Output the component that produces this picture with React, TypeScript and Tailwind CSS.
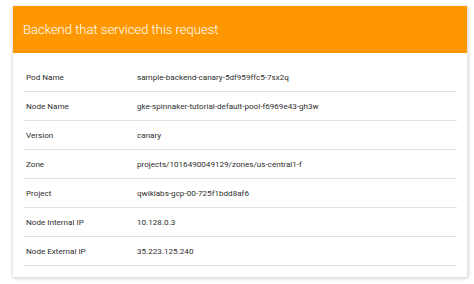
import React from 'react';

interface Row {
    label: string;
    value: string;
}

const rows: Row[] = [
    { label: 'Pod Name', value: 'sample-backend-canary-5df959ffc5-7sx2q' },
    { label: 'Node Name', value: 'gke-spinnaker-tutorial-default-pool-f6969e43-gh3w' },
    { label: 'Version', value: 'canary' },
    { label: 'Zone', value: 'projects/1016490049129/zones/us-central1-f' },
    { label: 'Project', value: 'qwiklabs-gcp-00-725f1bdd8af6' },
    { label: 'Node Internal IP', value: '10.128.0.3' },
    { label: 'Node External IP', value: '35.223.125.240' },
];

const App: React.FC = () => {
    return (
        <div className="w-[474px] h-[284px] bg-white pt-[6px] pl-[13px] font-['Roboto',sans-serif]">
            <div className="w-[455px] h-[271px] bg-white border-r border-[#e4e4e4] shadow-[0_1px_4px_rgba(0,0,0,0.22)]">
                {/* header */}
                <div className="h-[47px] bg-[#ff9800] flex items-center pl-[10px]">
                    <span className="text-white text-[13px] font-light">
                        Backend that serviced this request
                    </span>
                </div>

                <div className="pt-[10px] pl-[11px] pr-[10px]">
                    {rows.map((row) => (
                        <div
                            key={row.label}
                            className="h-[29px] flex items-center border-b border-[#e2e2e2] text-[8.1px] text-[#2e2e2e]"
                        >
                            <div className="w-[113px] pl-[2px]">{row.label}</div>
                            <div>{row.value}</div>
                        </div>
                    ))}
                </div>
            </div>
        </div>
    );
};

export default App;
